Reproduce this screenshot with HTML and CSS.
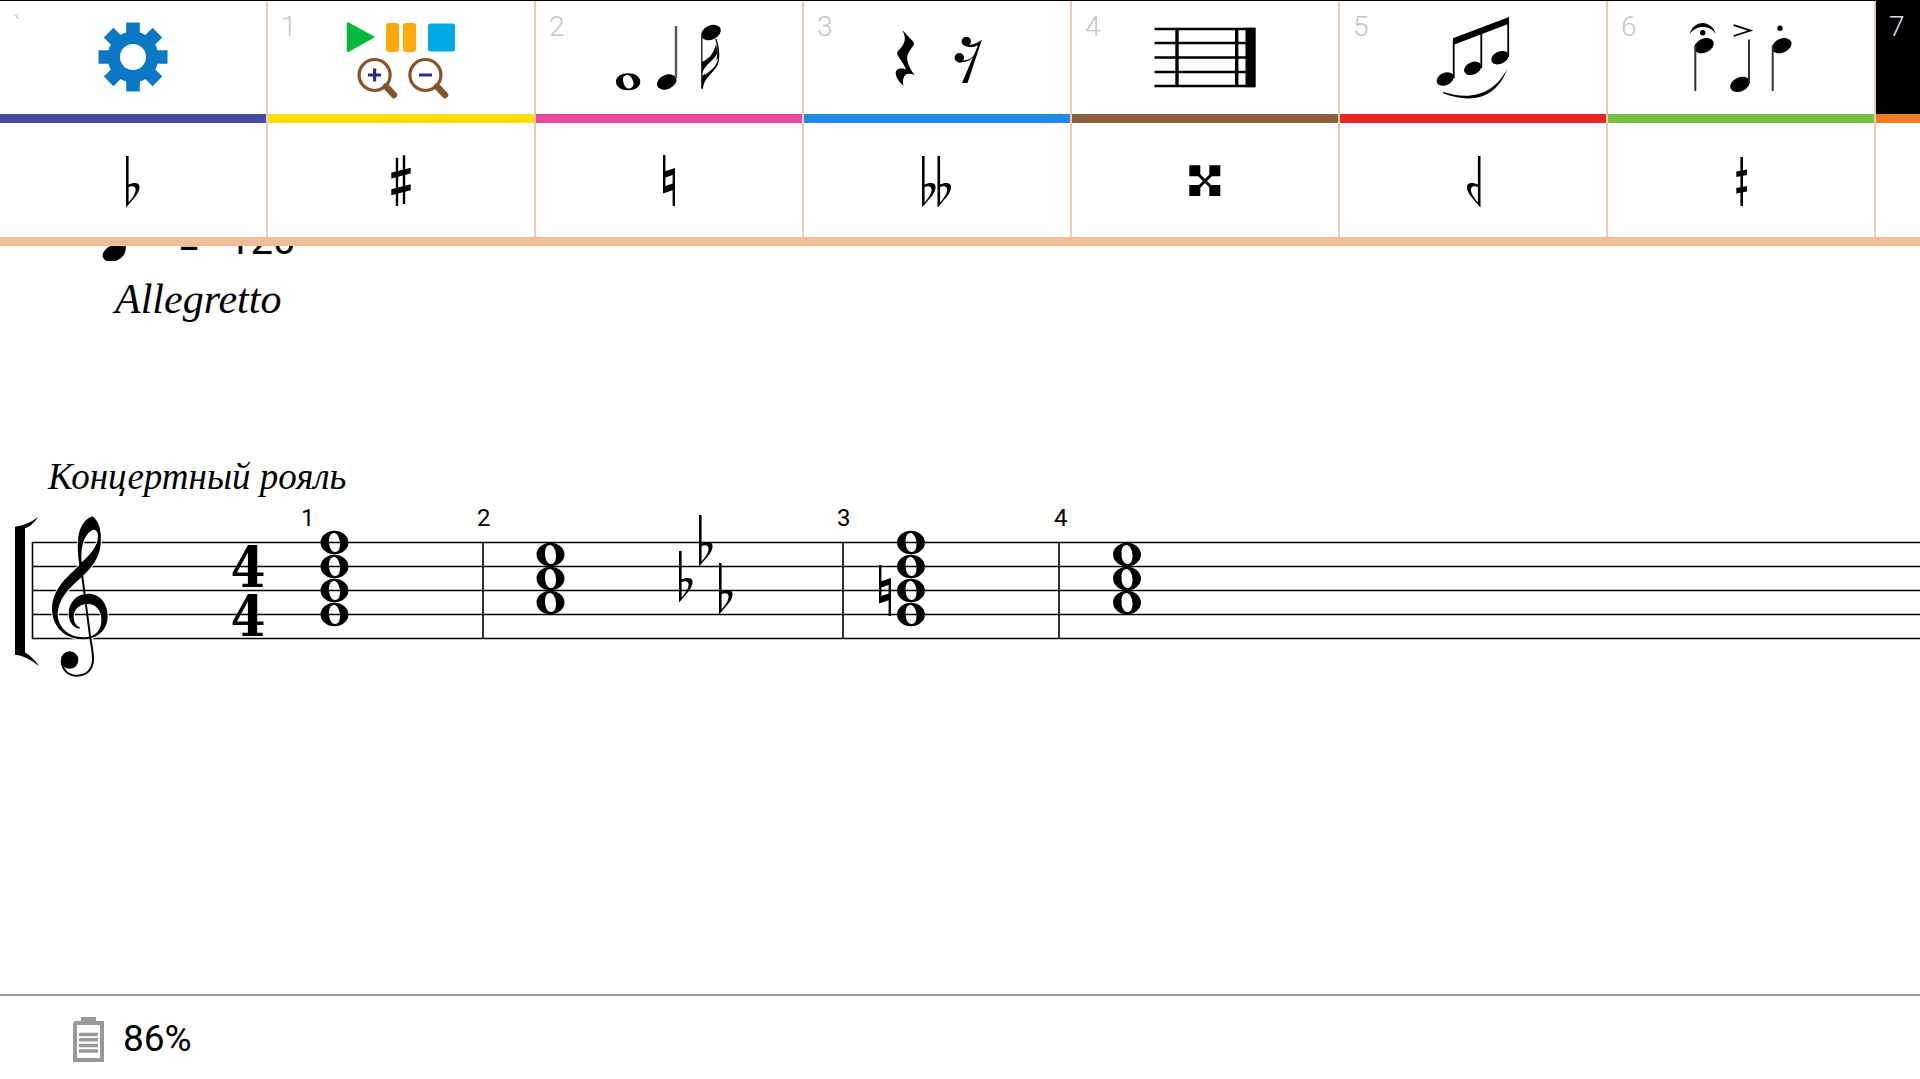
FILE: index.html
```html
<!DOCTYPE html>
<html lang="ru">
<head>
<meta charset="utf-8">
<meta name="viewport" content="width=device-width, initial-scale=1">
<title>Allegretto</title>
<link rel="stylesheet" href="styles.css">
</head>
<body>
<svg class="defs" aria-hidden="true">
  <defs>
    <path id="flat" fill-rule="evenodd" d="M0 0H2.6V28.5C7 26.2 14 26 13.6 31.5C13 38.5 6 44 .6 51H0ZM2.6 31V46.5C6 42.500 9 38.500 9.600 34.500C10 29.500 5.500 29.500 2.600 31Z"/>
    <path id="natural" d="M0 0H2.400V16.200L12 13V51H9.600V35.200L0 38.400ZM2.400 22.500V31L9.600 28.600V20Z" fill-rule="evenodd"/>
    <path id="whole" fill-rule="evenodd" d="M-14 0C-14-7-7-11.800 0-11.800S14-7 14 0 7 11.800 0 11.800-14 7-14 0ZM-5.500-1C-5.500 5-3 9.500 .5 9.500S5.500 6 5.500 1 3-9.500-.5-9.500-5.500-6-5.500-1Z"/>
    <ellipse id="head" rx="10.300" ry="7" transform="rotate(-24)"/>
    <g id="triad"><use href="#whole" y="12"/><use href="#whole" y="36"/><use href="#whole" y="60"/></g>
    <g id="seventh"><use href="#whole"/><use href="#whole" y="24"/><use href="#whole" y="48"/><use href="#whole" y="72"/></g>
  </defs>
</svg>

<header class="toolbar">
  <nav class="row tabs" aria-label="Menu">
    <button class="cell indigo" type="button" aria-label="Settings"><span class="key">`</span>
      <svg class="icon" viewBox="0 0 120 81"><g transform="translate(60 40)" fill="#0a78c4">
        <path id="teeth" d="M-6.800-34.500H6.800V34.500H-6.800ZM-34.500-6.800H34.500V6.800H-34.500Z"/><use href="#teeth" transform="rotate(45)"/><circle r="25.500"/><circle r="13" fill="#fff"/></g></svg>
    </button>
    <button class="cell yellow" type="button" aria-label="Playback and zoom"><span class="key">1</span>
      <svg class="icon" viewBox="0 0 120 81">
        <path d="M7 6.500L32 20L7 34Z" fill="#06b83c" stroke="#06b83c" stroke-width="2.500" stroke-linejoin="round"/>
        <g fill="#ffa80a"><rect x="45" y="6" width="13" height="29" rx="3"/><rect x="62" y="6" width="13" height="29" rx="3"/></g>
        <rect x="87" y="6.500" width="27" height="28" rx="2.500" fill="#00a9e4"/>
        <g fill="none" stroke="#87532b" stroke-width="3.200">
          <circle cx="33.600" cy="58" r="15.500"/><circle cx="84.400" cy="58" r="15.500"/>
          <path d="M45 69.500L53 78M96 69.500L104 78" stroke-width="6.500" stroke-linecap="round"/>
          <path d="M27 58H40M33.600 51.500V64.500M78 58H91" stroke="#2b2b8c"/>
        </g></svg>
    </button>
    <button class="cell pink" type="button" aria-label="Notes"><span class="key">2</span>
      <svg class="icon" viewBox="0 0 120 81">
        <path fill-rule="evenodd" d="M7 64.700C7 59.500 12.500 56.300 19.200 56.300S31.300 59.500 31.300 64.700 26 73.200 19.200 73.200 7 70 7 64.700ZM14 63C14.500 68.500 17.500 72 20.500 71.500S25 68 24.500 65.500 21.500 57.500 18 58 13.700 60.500 14 63Z"/>
        <use href="#head" x="57.700" y="65"/><use href="#head" x="102" y="15.500"/>
        <path d="M67 9V61" stroke="#555" stroke-width="2.400"/><path d="M92.800 18V71.700" stroke="#333" stroke-width="1.600"/>
        <path d="M93 72V59C101 53 107 48 108 39C109 32 108 27 106 22H107.500C110 29 111 36 109.800 44C108 55 96 58 94 71Z"/>
        <path d="M93 45C101 41 105 36 107 27L108.500 35C106 44 96 46 93 57Z"/>
        <path d="M96 55C102 51 106 47 108 41L108.800 43C107 50 102 53 96 58Z" fill="#fff"/></svg>
    </button>
    <button class="cell blue" type="button" aria-label="Rests"><span class="key">3</span>
      <svg class="icon" viewBox="0 0 120 81">
        <path d="M25.300 13L36.500 25C37.300 26.500 37 27.500 36 29C31 36 29.500 39 30.500 44C31.500 49 34 53 37.500 58C29 54.500 24.500 59 26.500 69C17 60 17 53 22 51.700C25 51 27.500 51.700 29 52.500C27 47 23 42 20.500 38C20 36.500 20 35.500 21 34C28 27 30 22 25.300 13Z"/>
        <circle cx="89.300" cy="24.500" r="4.700"/><circle cx="82.300" cy="40.700" r="4.700"/>
        <path d="M89 28C96 28 101 26 105 22.500L90.500 66H85L95.800 40.500C92.500 44 88 45.600 82 45.400V43.500C91 43.500 95.500 42 98 35.500L101 28.300C97.500 30.500 94 30.500 89 29.200Z"/></svg>
    </button>
    <button class="cell brown" type="button" aria-label="Bars"><span class="key">4</span>
      <svg class="icon" viewBox="0 0 120 81"><path d="M9.500 12H110M9.500 26H110M9.500 40.500H110M9.500 55H110M9.500 69H110" stroke="#000" stroke-width="2.400"/><path d="M32 11V70M91.700 11V70" stroke="#000" stroke-width="3.400"/><path d="M100.500 10.800H110.700V70.200H100.500Z"/></svg>
    </button>
    <button class="cell red" type="button" aria-label="Beams and slurs"><span class="key">5</span>
      <svg class="icon" viewBox="0 0 120 81"><path d="M40 21.300L96 0V6.700L40 28Z"/><path d="M40.700 24V61M68.300 14V51M95.200 3V40" stroke="#000" stroke-width="1.800"/>
        <g transform="translate(32.200 62) scale(.88)"><use href="#head"/></g><g transform="translate(59.700 51.300) scale(.88)"><use href="#head"/></g><g transform="translate(87 40.700) scale(.88)"><use href="#head"/></g>
        <path d="M30.300 75C58 84 82 77 94.500 51C84 82 58 87 30 76.300Z"/></svg>
    </button>
    <button class="cell green" type="button" aria-label="Articulation"><span class="key">6</span>
      <svg class="icon" viewBox="0 0 120 81"><path d="M8.700 17.500C12 2 31 2 35 17.500C30 7.500 14 7.500 8.700 17.500Z"/><circle cx="21.700" cy="15.700" r="2.700"/><circle cx="99" cy="11.200" r="2.700"/>
        <path d="M52.700 8.200L69.500 13.600L52.700 19" fill="none" stroke="#000" stroke-width="1.800"/>
        <use href="#head" x="23" y="28.700"/><use href="#head" x="59" y="67.300"/><use href="#head" x="100.700" y="28.700"/>
        <path d="M14.300 29V74M68 22.500V66M91.700 29V74" stroke="#333" stroke-width="2"/></svg>
    </button>
    <button class="cell orange current" type="button" aria-label="Accidentals" aria-current="true"><span class="key">7</span></button>
  </nav>
  <div class="row tools" role="toolbar" aria-label="Accidentals">
    <button class="cell" type="button" aria-label="Flat"><svg class="icon" viewBox="0 0 120 81"><use href="#flat" x="53" y="16"/></svg></button>
    <button class="cell" type="button" aria-label="Sharp"><svg class="icon" viewBox="0 0 120 81"><path d="M56 17.700V66M63 15.300V64" stroke="#000" stroke-width="2.400"/><path d="M50.300 32.700L69.700 27.700V33.600L50.300 38.600ZM50.300 49.300L69.700 44.300V50.200L50.300 55.200Z"/></svg></button>
    <button class="cell" type="button" aria-label="Natural"><svg class="icon" viewBox="0 0 120 81"><use href="#natural" x="54" y="15"/></svg></button>
    <button class="cell" type="button" aria-label="Double flat"><svg class="icon" viewBox="0 0 120 81"><use href="#flat" x="45" y="16"/><use href="#flat" x="60.500" y="16"/></svg></button>
    <button class="cell" type="button" aria-label="Double sharp"><svg class="icon" viewBox="0 0 120 81"><path d="M44.300 25.300h11v11h-11ZM64.300 25.300h11v11h-11ZM44.300 45h11v11h-11ZM64.300 45h11v11h-11Z"/><path d="M53 34L67 48M67 34L53 48" stroke="#000" stroke-width="3"/></svg></button>
    <button class="cell" type="button" aria-label="Half flat"><svg class="icon" viewBox="0 0 120 81"><use href="#flat" transform="translate(67.500 16) scale(-1 1)"/></svg></button>
    <button class="cell" type="button" aria-label="Half sharp"><svg class="icon" viewBox="0 0 120 81"><path d="M60.700 17V66" stroke="#000" stroke-width="2.600"/><path d="M55.300 31.500L66 29.500V35L55.300 37ZM55.300 48L66 46V51.500L55.300 53.500Z"/></svg></button>
    <button class="cell" type="button" aria-label="More"></button>
  </div>
</header>

<main class="score">
  <p class="tempo">
    <svg class="beat" viewBox="0 0 26 50"><g transform="translate(12 42) scale(1.150)"><use href="#head"/></g><path d="M22.800 0V39" stroke="#000" stroke-width="2"/></svg>
    <span class="equals">=</span><span>120</span>
  </p>
  <p class="marking">Allegretto</p>
  <p class="part">Концертный рояль</p>
  <svg class="staff">
    <g stroke="#000" stroke-width="1.600">
      <line x1="32" x2="100%" y1="42.500" y2="42.500"/><line x1="32" x2="100%" y1="66.500" y2="66.500"/><line x1="32" x2="100%" y1="90.500" y2="90.500"/><line x1="32" x2="100%" y1="114.500" y2="114.500"/><line x1="32" x2="100%" y1="138.500" y2="138.500"/>
      <path d="M32.500 42V139M483 42V139M843 42V139M1059 42V139"/>
    </g>
    <g transform="translate(5 5) scale(.33333)">
      <path d="M30 65C60 60 85 50 101 32C90 52 76 63 60 70V442C76 452 90 466 102 483C82 468 60 452 30 449Z"/>
      <g>
        <path stroke="#fff" stroke-width="6" paint-order="stroke" fill-rule="evenodd" d="M262 34C285 50 290 85 287 118C284 160 257 192 228 218C190 250 158 285 158 328C158 365 190 397 235 397C275 397 289 372 289 345C289 315 272 297 248 297C222 297 206 315 206 335C206 352 214 362 226 368L222 371C202 366 191 348 191 326C191 292 215 266 250 266C285 266 308 296 308 333C308 374 278 403 235 403C180 403 141 365 141 312C141 262 175 225 214 190L223 180C218 150 216 110 222 85C228 62 240 42 262 34ZM266 74C240 82 226 120 230 172C248 156 268 136 276 112C281 94 280 74 266 74Z"/>
        <path d="M225 170L232 215L256 400C263 440 267 455 263 475C256 505 232 513 212 512C190 511 170 494 170 466" fill="none" stroke="#000" stroke-width="6"/><circle cx="194" cy="465" r="26"/>
      </g>
    </g>
    <g class="meter"><text x="248" y="87">4</text><text x="248" y="136">4</text></g>
    <use href="#seventh" x="334.500" y="42.500"/>
    <use href="#triad" x="550.500" y="42.500"/>
    <use href="#flat" x="679" y="51"/><use href="#flat" x="699" y="15"/><use href="#flat" x="719" y="63"/>
    <use href="#natural" x="879" y="65"/>
    <use href="#seventh" x="911" y="42.500"/>
    <use href="#triad" x="1127" y="42.500"/>
    <g class="numbers"><text x="301" y="26">1</text><text x="477" y="26">2</text><text x="837" y="26">3</text><text x="1054" y="26">4</text></g>
  </svg>
</main>

<footer class="status">
  <svg class="battery" viewBox="0 0 31 45"><path fill="#999" fill-rule="evenodd" d="M8 0H23V4H31V45H0V6L2 4H8ZM4 8V41H27V8Z"/><path d="M6 17.500H25M6 22.800H25M6 28.500H25M6 34H25" stroke="#999" stroke-width="3.500"/></svg>
  <span>86%</span>
</footer>
</body>
</html>
```

FILE: styles.css
```css
* {
  box-sizing: border-box;
}

body {
  margin: 0;
  min-height: 100vh;
  display: flex;
  flex-direction: column;
  overflow-x: hidden;
  background: #fff;
  color: #000;
  font-family: Roboto, "Noto Sans", sans-serif;
}

p {
  margin: 0;
}

.defs {
  position: absolute;
  width: 0;
  height: 0;
}

.toolbar {
  position: sticky;
  top: 0;
  z-index: 1;
  overflow: hidden;
  background: #fff;
  border-top: 1px solid #000;
  border-bottom: 9px solid #efbd98;
}

.row {
  display: flex;
}

.cell {
  position: relative;
  flex: 0 0 268px;
  display: flex;
  align-items: center;
  justify-content: center;
  height: 114px;
  padding: 0;
  border: 0;
  border-right: 2px solid #ebc9b4;
  background: #fff;
  color: #c4c4c4;
  font: inherit;
}

.tabs .cell {
  height: 122px;
  padding: 0 0 9px;
}

.tabs .cell::after {
  content: "";
  position: absolute;
  inset: auto 0 0;
  height: 9px;
  background: var(--accent);
}

.indigo { --accent: #454b9e; }
.yellow { --accent: #ffdf00; }
.pink { --accent: #e84a99; }
.blue { --accent: #2188e6; }
.brown { --accent: #8b5e3c; }
.red { --accent: #eb2426; }
.green { --accent: #77c043; }
.orange { --accent: #f27c21; }

.tabs .current {
  background: #000;
  color: #ddd;
}

.key {
  position: absolute;
  top: 10px;
  left: 13px;
  font-size: 28px;
  font-weight: 300;
  line-height: 32px;
}

.icon {
  width: 120px;
  height: 81px;
  overflow: visible;
}

.score {
  flex: 1;
  margin-top: -30px;
}

.tempo {
  display: flex;
  align-items: flex-end;
  gap: 28px;
  height: 45px;
  padding-left: 102px;
  font-size: 40px;
  line-height: 40px;
}

.beat {
  flex: none;
  width: 26px;
  height: 50px;
  margin-right: 22px;
}

.equals {
  line-height: 32px;
}

.marking {
  margin-top: 14px;
  padding-left: 115px;
  font: italic 42px/48px "Liberation Serif", serif;
}

.part {
  margin-top: 134px;
  padding-left: 48px;
  font: italic 37px/40px "Liberation Serif", serif;
}

.staff {
  display: block;
  width: 100%;
  height: 184px;
  margin-top: 3px;
}

.numbers {
  font-size: 24px;
}

.meter {
  font: bold 56px "DejaVu Serif Condensed", "DejaVu Serif", serif;
  text-anchor: middle;
}

.status {
  display: flex;
  align-items: center;
  gap: 19px;
  height: 85px;
  padding: 3px 73px 0;
  border-top: 2px solid #999;
  font-size: 37px;
  line-height: 40px;
}

.battery {
  width: 31px;
  height: 45px;
}
```
